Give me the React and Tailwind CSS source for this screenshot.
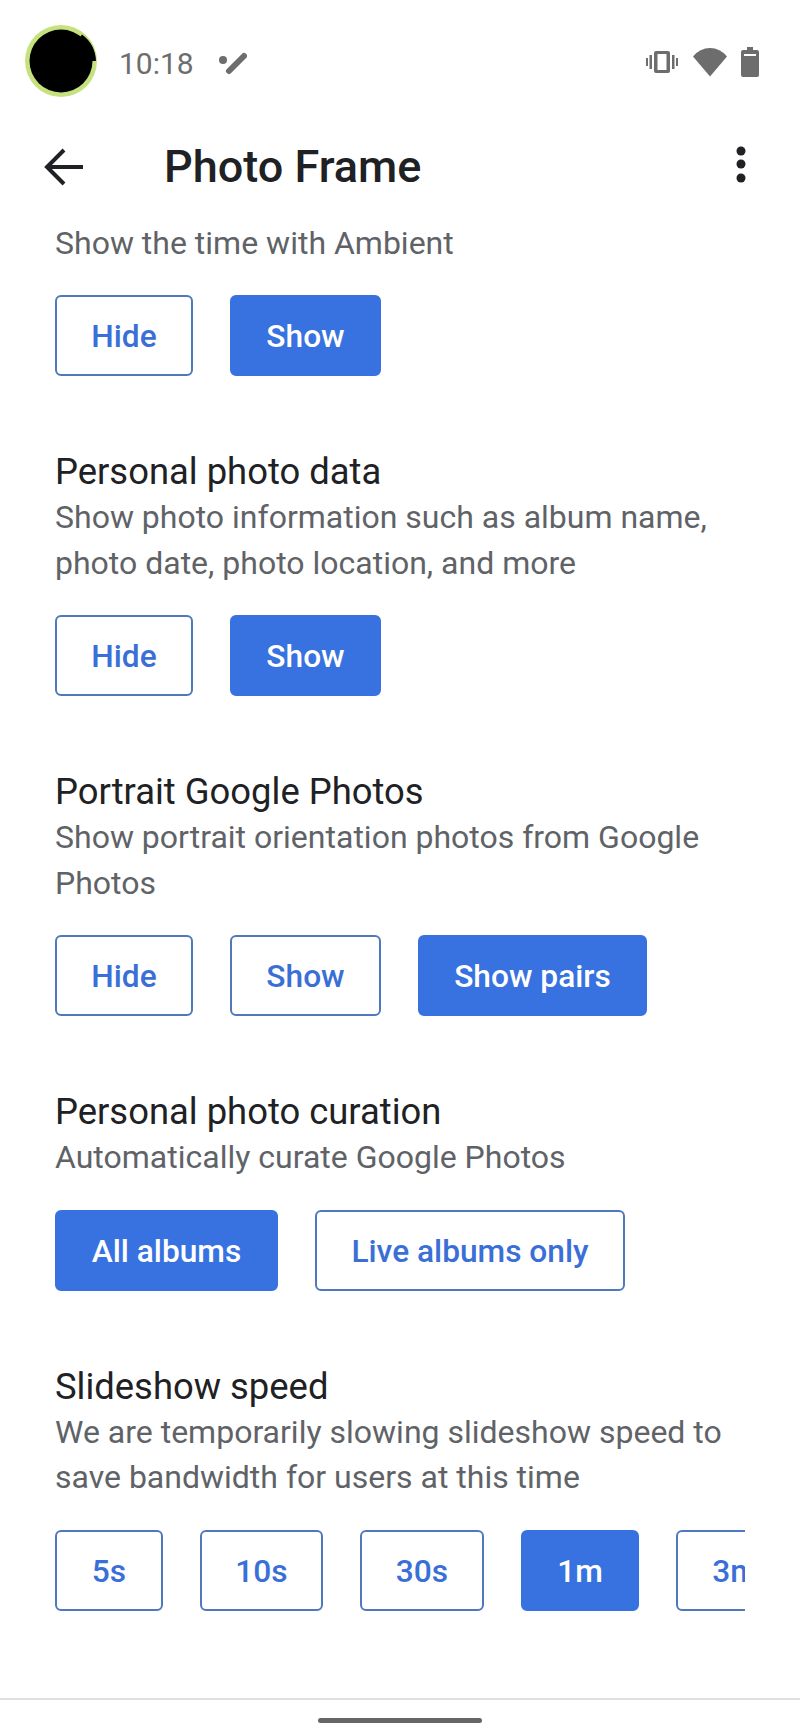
const font = { fontFamily: 'Roboto, sans-serif' };

function Btn({ label, width, on }) {
  return (
    <div
      className={
        'flex h-[81px] shrink-0 items-center justify-center rounded-[6px] border-[2px] pt-[3px] text-[31.7px] font-medium ' +
        width +
        (on ? ' border-[#3871e0] bg-[#3871e0] text-white' : ' border-[#5079bd] bg-white text-[#3a6fd8]')
      }
    >
      {label}
    </div>
  );
}

function Section({ title, lines, buttons, active }) {
  return (
    <section className="flex flex-col">
      {title && <h2 className="text-[36.4px] leading-[45px] text-[#202124]">{title}</h2>}
      <div className="pt-[1px] text-[32px] leading-[45.5px] text-[#5f6368]">
        {lines.map((l) => (
          <div key={l} className="whitespace-nowrap">{l}</div>
        ))}
      </div>
      <div className="mt-[29px] flex gap-[37px] overflow-hidden">
        {buttons.map(([b, w]) => (
          <Btn key={b} label={b} width={w} on={b === active} />
        ))}
      </div>
    </section>
  );
}

export default function App() {
  return (
    <div className="flex h-[1734px] w-[800px] flex-col overflow-hidden bg-white" style={font}>
      <div className="flex h-[122px] items-center justify-between pl-[25px] pr-[41px]">
        <div className="flex items-center">
          <svg width="72" height="72" viewBox="0 0 72 72">
            <circle cx="36" cy="36" r="36" fill="#c6e27e" />
            <circle cx="36" cy="36" r="31.5" fill="#000" />
            <path d="M36 36 L57 9.500 A34.500 34.500 0 0 1 71 36 Z" fill="#000" />
          </svg>
          <span className="ml-[22px] mt-[6px] text-[30px] leading-none text-[#6d6d6d]">10:18</span>
          <svg className="ml-[23px] mt-[3px]" width="30" height="24" viewBox="0 0 30 24">
            <circle cx="6" cy="9" r="4" fill="#6d6d6d" />
            <path d="M12 20 L27 5" stroke="#6d6d6d" strokeWidth="6" strokeLinecap="round" />
          </svg>
        </div>
        <div className="mt-[2px] flex items-center">
          <svg width="32" height="24" viewBox="0 0 32 24" fill="#6d6d6d">
            <path fillRule="evenodd" d="M10 1h12a2 2 0 0 1 2 2v18a2 2 0 0 1-2 2H10a2 2 0 0 1-2-2V3a2 2 0 0 1 2-2zm1.500 3v16h9V4z" />
            <rect x="3.500" y="5" width="2.500" height="14" />
            <rect x="0" y="8" width="2" height="8" />
            <rect x="26" y="5" width="2.500" height="14" />
            <rect x="30" y="8" width="2" height="8" />
          </svg>
          <svg className="ml-[14px]" width="36" height="30" viewBox="0 0 36 30" fill="#6d6d6d">
            <path d="M18 29.500 L1 9.500 Q8 1 18 1 Q28 1 35 9.500 Z" />
          </svg>
          <svg className="ml-[13px]" width="18" height="30" viewBox="0 0 18 30" fill="#6d6d6d">
            <path fillRule="evenodd" d="M6 0h6v3h4a2 2 0 0 1 2 2v23a2 2 0 0 1-2 2H2a2 2 0 0 1-2-2V5a2 2 0 0 1 2-2h4zM3 7v2h12V7z" />
          </svg>
        </div>
      </div>

      <div className="flex h-[97.5px] items-start justify-between pl-[44px] pr-[54px]">
        <div className="flex items-center">
          <svg className="mt-[22px]" width="40" height="38" viewBox="0 0 40 38" fill="none" stroke="#202124" strokeWidth="4">
            <path d="M39 19H4M20 2 3 19l17 17" />
          </svg>
          <h1 className="ml-[80px] mt-[23px] text-[45px] leading-[44px] font-medium text-[#202124]">Photo Frame</h1>
        </div>
        <svg className="mt-[20px]" width="10" height="46" viewBox="0 0 10 46" fill="#202124">
          <circle cx="5" cy="9" r="4.500" />
          <circle cx="5" cy="22" r="4.500" />
          <circle cx="5" cy="36" r="4.500" />
        </svg>
      </div>

      <main className="flex min-h-0 flex-1 flex-col gap-[73px] pl-[55px] pr-[55px]">
        <Section lines={['Show the time with Ambient']} buttons={[['Hide', 'w-[138px]'], ['Show', 'w-[151px]']]} active="Show" />
        <Section
          title="Personal photo data"
          lines={['Show photo information such as album name,', 'photo date, photo location, and more']}
          buttons={[['Hide', 'w-[138px]'], ['Show', 'w-[151px]']]}
          active="Show"
        />
        <Section
          title="Portrait Google Photos"
          lines={['Show portrait orientation photos from Google', 'Photos']}
          buttons={[['Hide', 'w-[138px]'], ['Show', 'w-[151px]'], ['Show pairs', 'w-[229px]']]}
          active="Show pairs"
        />
        <Section
          title="Personal photo curation"
          lines={['Automatically curate Google Photos']}
          buttons={[['All albums', 'w-[223px]'], ['Live albums only', 'w-[310px]']]}
          active="All albums"
        />
        <Section
          title="Slideshow speed"
          lines={['We are temporarily slowing slideshow speed to', 'save bandwidth for users at this time']}
          buttons={[['5s', 'w-[108px]'], ['10s', 'w-[123px]'], ['30s', 'w-[124px]'], ['1m', 'w-[118px]'], ['3m', 'w-[118px]']]}
          active="1m"
        />
      </main>

      <footer className="flex h-[36px] shrink-0 justify-center border-t-[2px] border-[#e0e0e0] pt-[18px]">
        <div className="h-[5px] w-[164px] rounded-full bg-[#666666]" />
      </footer>
    </div>
  );
}
